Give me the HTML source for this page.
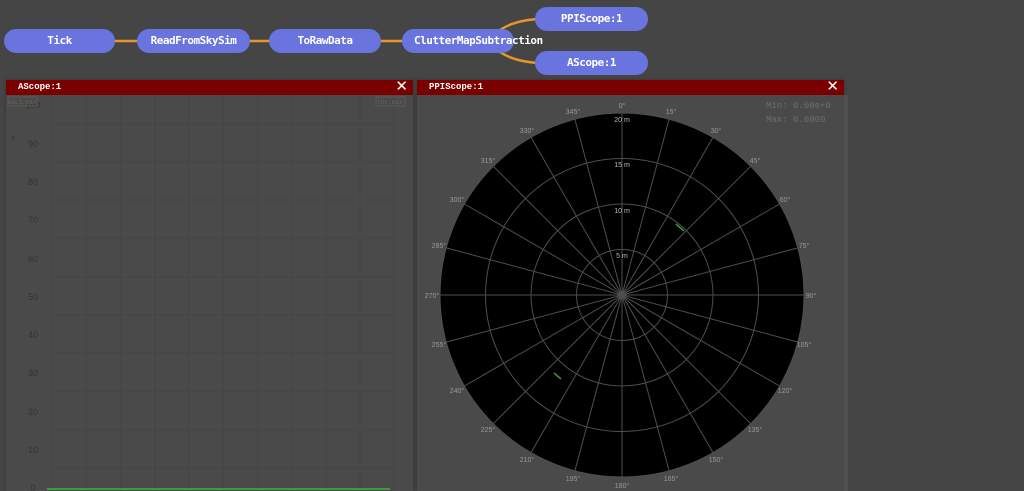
<!DOCTYPE html>
<html><head><meta charset="utf-8"><style>
html,body{margin:0;padding:0;background:#454545;width:1024px;height:491px;overflow:hidden;font-family:"Liberation Mono",monospace}
.node{position:absolute;height:24px;border-radius:12px;background:#6a74df;color:#fff;font-size:11px;line-height:24px;text-align:center;font-family:"DejaVu Sans Mono",monospace;font-weight:bold;letter-spacing:-0.5px}
.panel{position:absolute;background:#4a4a4a;box-shadow:0 0 3px #333}
.hdr{height:15px;background:#7a0000;color:#fff;font-size:9px;font-weight:bold;line-height:15px;padding-left:12px;position:relative}
.x{position:absolute;right:5px;top:-1px;font-size:15px;font-family:"DejaVu Sans",sans-serif;font-weight:bold}
</style></head><body>
<svg style="position:absolute;left:0;top:0" width="1024" height="80">
<g stroke="#e8962a" stroke-width="2.5" fill="none">
<line x1="112" y1="41" x2="140" y2="41"/><line x1="247" y1="41" x2="272" y2="41"/><line x1="378" y1="41" x2="405" y2="41"/>
<path d="M500 30 Q515 20 540 19"/><path d="M500 52 Q515 62 540 63"/>
</g></svg>
<div class="node" style="left:4px;top:29px;width:111px">Tick</div>
<div class="node" style="left:137px;top:29px;width:113px">ReadFromSkySim</div>
<div class="node" style="left:269px;top:29px;width:112px">ToRawData</div>
<div class="node" style="left:402px;top:29px;width:112px;text-indent:12px;white-space:nowrap">ClutterMapSubtraction</div>
<div class="node" style="left:535px;top:7px;width:113px">PPIScope:1</div>
<div class="node" style="left:535px;top:51px;width:113px">AScope:1</div>

<div class="panel" style="left:6px;top:80px;width:407px;height:411px">
<div class="hdr">AScope:1<span class="x">✕</span></div>
<svg width="407" height="396" style="position:absolute;left:0;top:15px">
<g stroke="#444" stroke-width="1">
<line x1="46" y1="29" x2="388" y2="29"/><line x1="46" y1="67" x2="388" y2="67"/><line x1="46" y1="105" x2="388" y2="105"/><line x1="46" y1="143" x2="388" y2="143"/><line x1="46" y1="182" x2="388" y2="182"/><line x1="46" y1="220" x2="388" y2="220"/><line x1="46" y1="258" x2="388" y2="258"/><line x1="46" y1="296" x2="388" y2="296"/><line x1="46" y1="335" x2="388" y2="335"/><line x1="46" y1="373" x2="388" y2="373"/>
<line x1="46" y1="0" x2="46" y2="396"/><line x1="80" y1="0" x2="80" y2="396"/><line x1="115" y1="0" x2="115" y2="396"/><line x1="149" y1="0" x2="149" y2="396"/><line x1="183" y1="0" x2="183" y2="396"/><line x1="217" y1="0" x2="217" y2="396"/><line x1="252" y1="0" x2="252" y2="396"/><line x1="286" y1="0" x2="286" y2="396"/><line x1="320" y1="0" x2="320" y2="396"/><line x1="354" y1="0" x2="354" y2="396"/><line x1="388" y1="0" x2="388" y2="396"/>
</g>
<g fill="#333" font-family="Liberation Sans,sans-serif" font-size="9" text-anchor="middle">
<text x="27" y="13">100</text><text x="27" y="52">90</text><text x="27" y="90">80</text><text x="27" y="128">70</text><text x="27" y="167">60</text><text x="27" y="205">50</text><text x="27" y="243">40</text><text x="27" y="281">30</text><text x="27" y="320">20</text><text x="27" y="358">10</text><text x="27" y="396">0</text>
<text x="7" y="45" font-size="7">v</text>
</g>
<rect x="2" y="2" width="29" height="9" fill="none" stroke="#5e5a50"/><rect x="370" y="2" width="29" height="9" fill="none" stroke="#5e5a50"/>
<text x="16" y="9" font-size="6" fill="#666" text-anchor="middle">ascl.max</text><text x="384" y="9" font-size="6" fill="#666" text-anchor="middle">thr.max</text>
<line x1="41" y1="394" x2="384" y2="394" stroke="#3d9a3d" stroke-width="2"/>
</svg></div>

<div class="panel" style="left:417px;top:80px;width:427px;height:411px">
<div class="hdr">PPIScope:1<span class="x">✕</span></div></div>
<div style="position:absolute;left:844px;top:95px;width:4px;height:396px;background:#505050"></div>
<svg style="position:absolute;left:0;top:0" width="1024" height="491">
<circle cx="622" cy="295" r="182" fill="#000"/>
<g stroke="#4f4f4f" stroke-width="1" fill="none">
<circle cx="622" cy="295" r="182"/><circle cx="622" cy="295" r="136.5"/><circle cx="622" cy="295" r="91"/><circle cx="622" cy="295" r="45.5"/>
<line x1="622" y1="113" x2="622" y2="477"/><line x1="669.1" y1="119.2" x2="574.9" y2="470.8"/><line x1="713" y1="137.4" x2="531" y2="452.6"/><line x1="750.7" y1="166.3" x2="493.3" y2="423.7"/><line x1="779.6" y1="204" x2="464.4" y2="386"/><line x1="797.8" y1="247.9" x2="446.2" y2="342.1"/><line x1="804" y1="295" x2="440" y2="295"/><line x1="797.8" y1="342.1" x2="446.2" y2="247.9"/><line x1="779.6" y1="386" x2="464.4" y2="204"/><line x1="750.7" y1="423.7" x2="493.3" y2="166.3"/><line x1="713" y1="452.6" x2="531" y2="137.4"/><line x1="669.1" y1="470.8" x2="574.9" y2="119.2"/>
</g>
<g stroke="#3a9a3a" stroke-width="1.5"><line x1="676" y1="224" x2="684" y2="231"/><line x1="554" y1="373" x2="561" y2="379"/></g>
<g fill="#bbb" font-family="Liberation Sans,sans-serif" font-size="7" text-anchor="middle">
<text x="622" y="122">20 m</text><text x="622" y="167">15 m</text><text x="622" y="213">10 m</text><text x="622" y="258">5 m</text>
</g>
<g fill="#999" font-family="Liberation Sans,sans-serif" font-size="7" text-anchor="middle">
<text x="622" y="108">0°</text><text x="671" y="114">15°</text><text x="716" y="133">30°</text><text x="755" y="163">45°</text><text x="785" y="202">60°</text><text x="804" y="248">75°</text><text x="811" y="298">90°</text><text x="804" y="347">105°</text><text x="785" y="393">120°</text><text x="755" y="432">135°</text><text x="716" y="462">150°</text><text x="671" y="481">165°</text><text x="622" y="488">180°</text><text x="573" y="481">195°</text><text x="527" y="462">210°</text><text x="488" y="432">225°</text><text x="457" y="393">240°</text><text x="439" y="347">255°</text><text x="432" y="298">270°</text><text x="439" y="248">285°</text><text x="457" y="202">300°</text><text x="488" y="163">315°</text><text x="527" y="133">330°</text><text x="573" y="114">345°</text>
</g>
<g fill="#6e6e6e" font-family="Liberation Mono,monospace" font-size="9"><text x="766" y="108">Min: 0.00e+0</text><text x="766" y="122">Max: 0.0000</text></g>
</svg>
</body></html>
